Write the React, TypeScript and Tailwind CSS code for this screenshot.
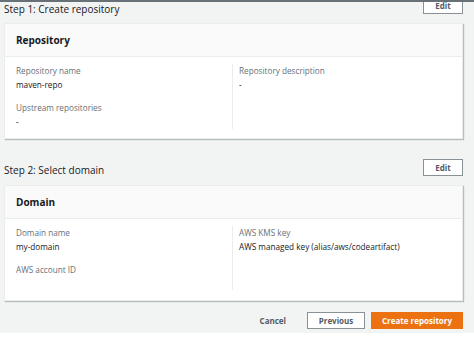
import React from "react";

type Field = { label: string; value?: string };

const font = { fontFamily: '"Open Sans", "Noto Sans", Arial, sans-serif' };

function EditButton() {
  return (
    <button className="h-[17px] w-[40px] shrink-0 border border-[#879196] bg-white text-[8px] font-bold text-[#545b64] leading-none">
      Edit
    </button>
  );
}

function FieldItem({ field }: { field: Field }) {
  return (
    <div className="flex flex-col">
      <span className="text-[8.2px] leading-[14px] text-[#687078]">{field.label}</span>
      {field.value !== undefined && (
        <span className="text-[8.2px] leading-[14px] text-[#16191f]">{field.value}</span>
      )}
    </div>
  );
}

function Card({
  heading,
  left,
  right,
}: {
  heading: string;
  left: Field[];
  right: Field[];
}) {
  return (
    <div className="mr-[11px] border border-[#eaeded] bg-white shadow-[1px_1px_1px_rgba(0,28,36,0.25)]">
      <div className="flex h-[33px] items-center border-b border-[#eaeded] bg-[#fafafa] px-[11px]">
        <h2 className="text-[10px] font-bold text-[#16191f]">{heading}</h2>
      </div>
      <div className="grid h-[81px] grid-cols-[217px_1fr] pt-[7px] pb-[10px] pl-[11px]">
        <div className="flex flex-col gap-[9px] border-r border-[#eaeded]">
          {left.map((f) => (
            <FieldItem key={f.label} field={f} />
          ))}
        </div>
        <div className="flex flex-col gap-[9px] pl-[6px]">
          {right.map((f) => (
            <FieldItem key={f.label} field={f} />
          ))}
        </div>
      </div>
    </div>
  );
}

export default function App() {
  return (
    <div className="h-[340px] w-[474px] overflow-hidden bg-white" style={font}>
      <div className="relative z-10 h-[2px] bg-[#687078]" />
      <div className="-mt-[5px] h-[336px] bg-[#f2f3f3] pl-[4px]">
        {/* Step 1 */}
        <div className="mr-[11px] flex h-[17px] items-start justify-between">
          <h1 className="pt-[4px] text-[10px] leading-[16px] text-[#16191f]">Step 1: Create repository</h1>
          <EditButton />
        </div>
        <div className="mt-[9px]">
          <Card
            heading="Repository"
            left={[
              { label: "Repository name", value: "maven-repo" },
              { label: "Upstream repositories", value: "-" },
            ]}
            right={[{ label: "Repository description", value: "-" }]}
          />
        </div>

        {/* Step 2 */}
        <div className="mt-[20px] mr-[11px] flex h-[17px] items-start justify-between">
          <h1 className="pt-[3px] text-[10px] leading-[16px] text-[#16191f]">Step 2: Select domain</h1>
          <EditButton />
        </div>
        <div className="mt-[9px]">
          <Card
            heading="Domain"
            left={[
              { label: "Domain name", value: "my-domain" },
              { label: "AWS account ID" },
            ]}
            right={[
              { label: "AWS KMS key", value: "AWS managed key (alias/aws/codeartifact)" },
            ]}
          />
        </div>

        {/* Footer actions */}
        <div className="mt-[11px] mr-[11px] flex items-center justify-end gap-[6px]">
          <button className="h-[17px] px-[15px] text-[8px] font-bold text-[#545b64]">Cancel</button>
          <button className="h-[17px] w-[58px] border border-[#879196] bg-white text-[8px] font-bold text-[#545b64]">
            Previous
          </button>
          <button className="h-[17px] w-[92px] bg-[#ec7211] text-[8px] font-bold text-white">
            Create repository
          </button>
        </div>
      </div>
    </div>
  );
}
